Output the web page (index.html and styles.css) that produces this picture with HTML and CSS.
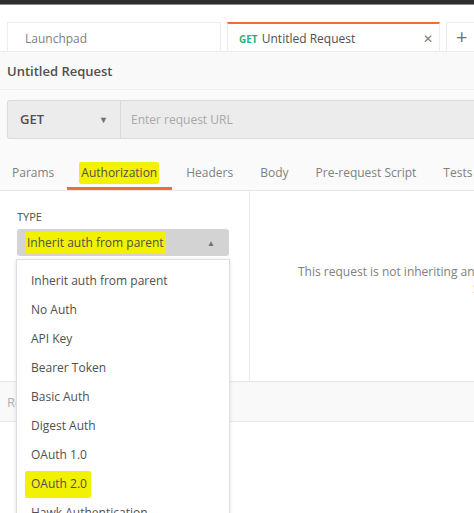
FILE: index.html
```html
<!DOCTYPE html>
<html>
<head>
	<meta charset="UTF-8">
	<title>Untitled Request</title>
<link rel="stylesheet" href="styles.css">
</head>
<body>

	<div class="topbar"></div>

	<div class="tabstrip">
		<div class="tab">Launchpad</div>
		<div class="tab active">
			<span class="verb">GET</span> Untitled Request
			<span class="close">&#x2715;</span>
		</div>
		<div class="tab plus">+</div>
	</div>

	<div class="titlebar">Untitled Request</div>

	<div class="urlrow">
		<div class="urlbox">
			<div class="method">GET <span class="caret">&#9660;</span></div>
			<div class="urlinput">Enter request URL</div>
		</div>
	</div>

	<div class="reqtabs">
		<div class="rtab first">Params</div>
		<div class="rtab active"><span class="marker">Authorization</span></div>
		<div class="rtab">Headers</div>
		<div class="rtab">Body</div>
		<div class="rtab">Pre-request Script</div>
		<div class="rtab">Tests</div>
	</div>

	<div class="main">
		<div class="leftpane">
			<div class="label">TYPE</div>
			<div class="select">
				<span class="marker">Inherit auth from parent</span>
				<span class="caret up">&#9650;</span>
			</div>
		</div>
		<div class="rightpane">
			<div class="msg">This request is not inheriting any authorization helper at the moment.</div>
			<div class="msg second">Save it in a collection to use the parent's helper.</div>
		</div>
	</div>

	<div class="response">Response</div>

	<!-- offene auswahlliste liegt ueber allem -->
	<div class="dropdown">
		<div class="item">Inherit auth from parent</div>
		<div class="item">No Auth</div>
		<div class="item">API Key</div>
		<div class="item">Bearer Token</div>
		<div class="item">Basic Auth</div>
		<div class="item">Digest Auth</div>
		<div class="item">OAuth 1.0</div>
		<div class="item"><span class="marker big">OAuth 2.0</span></div>
		<div class="item">Hawk Authentication</div>
	</div>

</body>
</html>
```

FILE: styles.css
```css
body {
	margin: 0;
	width: 474px;
	height: 513px;
	overflow: hidden;
	background-color: #fff;
	font-family: "Open Sans", "Liberation Sans", sans-serif;
	font-size: 12px;
	color: #505050;
	position: relative;
}
.topbar {
	height: 4px;
	background-color: #2e2e2e;
	border-bottom: 1px solid #8a8a8a;
}
.tabstrip {
	display: flex;
	gap: 6px;
	padding: 17px 0 0 7px;
	background-color: #fff;
	border-bottom: 1px solid #ececec;
}
.tab {
	flex: none;
	width: 195px;
	height: 26px;
	line-height: 28px;
	padding: 2px 0 0 17px;
	border: 1px solid #ececec;
	border-bottom: none;
	color: #808080;
	background-color: #fff;
	position: relative;
}
.tab.active {
	width: 200px;
	padding: 1px 0 0 11px;
	border-top: 2px solid #f26b3a;
	height: 26px;
	line-height: 27px;
	color: #505050;
}
.verb {
	font-size: 10px;
	font-weight: bold;
	color: #26b47f;
	margin-right: 1px;
}
.close {
	float: right;
	margin-right: 6px;
	font-size: 12px;
	color: #808080;
}
.tab.plus {
	width: 28px;
	padding-left: 9px;
	line-height: 24px;
	font-size: 20px;
	color: #707070;
}
.titlebar {
	height: 37px;
	line-height: 38px;
	padding-left: 7px;
	background-color: #f9f9f9;
	font-size: 13px;
	font-weight: 600;
	color: #505050;
	border-bottom: 1px solid #eeeeee;
}
.urlrow {
	background-color: #fafafa;
	padding: 10px 0 0 7px;
}
.urlbox {
	display: flex;
	height: 37px;
	background-color: #ececec;
	border: 1px solid #dadada;
	border-right: none;
	border-radius: 3px 0 0 3px;
}
.method {
	width: 100px;
	padding-left: 12px;
	line-height: 37px;
	font-size: 13px;
	font-weight: 600;
	color: #505050;
	border-right: 1px solid #dadada;
	position: relative;
}
.caret {
	font-size: 9px;
	color: #707070;
	position: absolute;
	right: 12px;
	top: 0;
}
.urlinput {
	padding-left: 10px;
	line-height: 37px;
	color: #a8a8a8;
}
.reqtabs {
	display: flex;
	height: 51px;
	background-color: #fafafa;
	border-bottom: 1px solid #e8e8e8;
	white-space: nowrap;
}
.rtab {
	flex: none;
	padding: 0 13px 0 14px;
	line-height: 68px;
	height: 48px;
	color: #808080;
	border-bottom: 3px solid transparent;
}
.rtab.first {
	margin-left: -2px;
}
.rtab.active {
	border-bottom-color: #f26b3a;
	color: #505050;
}
.marker {
	background-color: #f2f200;
	border-radius: 2px;
	padding: 2px 2px 3px;
	margin-left: -2px;
}
.main {
	display: flex;
	height: 190px;
}
.leftpane {
	width: 212px;
	flex: none;
	padding: 18px 20px 0 17px;
	border-right: 1px solid #ececec;
}
.label {
	font-size: 11px;
	color: #505050;
	margin-bottom: 5px;
}
.select {
	height: 27px;
	line-height: 27px;
	padding-left: 10px;
	background-color: #d3d3d3;
	border-radius: 3px;
	position: relative;
	color: #505050;
}
.caret.up {
	right: 14px;
	font-size: 8px;
}
.rightpane {
	flex: 1;
	padding: 72px 0 0 48px;
	white-space: nowrap;
	overflow: hidden;
	color: #808080;
}
.msg {
	height: 17px;
}
.msg.second {
	padding-left: 175px;
}
.response {
	height: 39px;
	line-height: 41px;
	padding-left: 7px;
	background-color: #f9f9f9;
	border-top: 1px solid #e6e6e6;
	border-bottom: 1px solid #e6e6e6;
	font-size: 13px;
	color: #b0b0b0;
}
.dropdown {
	position: absolute;
	left: 16px;
	top: 259px;
	width: 198px;
	height: 270px;
	padding: 6px 0 0 14px;
	background-color: #fff;
	border: 1px solid #dedede;
	box-shadow: 0 1px 4px rgba(0, 0, 0, 0.12);
}
.item {
	height: 29px;
	line-height: 29px;
	font-size: 12px;
	color: #505050;
}
.marker.big {
	padding: 4px 4px 6px 6px;
	margin-left: -6px;
}
```
